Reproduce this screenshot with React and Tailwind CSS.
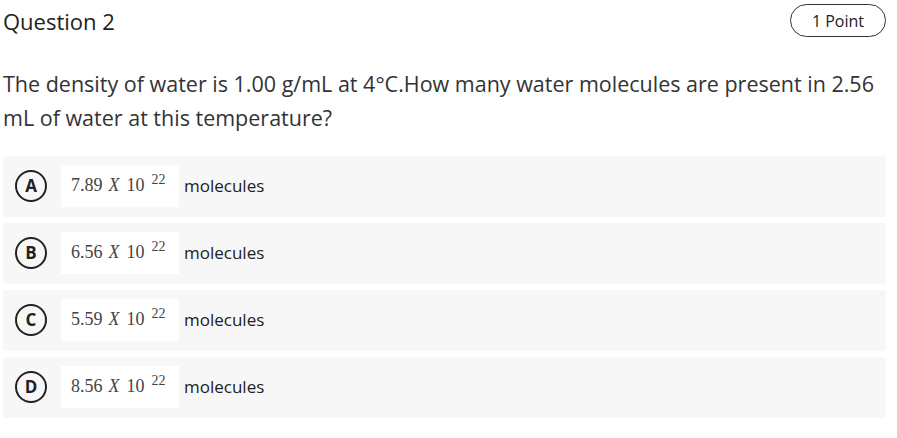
import React from "react";

const options = [
  { letter: "A", mant: "7.89" },
  { letter: "B", mant: "6.56" },
  { letter: "C", mant: "5.59" },
  { letter: "D", mant: "8.56" },
];

export default function App() {
  return (
    <div
      className="w-[897px] h-[438px] bg-white pl-[3px] pr-[11px] text-[#222]"
      style={{ fontFamily: "'Open Sans', sans-serif" }}
    >
      <div className="flex items-center justify-between pt-[4px]">
        <div className="text-[22px] leading-[30px] font-medium text-[#222]">Question 2</div>
        <div className="h-[33px] w-[96px] rounded-full border border-[#333] flex items-center justify-center text-[16px] text-[#222] font-medium">
          1 Point
        </div>
      </div>
      <div className="mt-[30px] text-[21.5px] leading-[34px] text-[#333]">
        The density of water is 1.00 g/mL at 4°C.How many water molecules are present in 2.56 mL of water at this temperature?
      </div>
      <div className="mt-[21px] flex flex-col gap-[6px]">
        {options.map((o) => (
          <div key={o.letter} className="h-[61px] rounded-[3px] bg-[#f7f7f7] flex items-center pl-[12px] pb-[2px]">
            <div className="w-[32px] h-[32px] rounded-full border-2 border-[#222] flex items-center justify-center text-[17px] font-bold text-[#222] leading-none">
              {o.letter}
            </div>
            <div
              className="ml-[14px] h-[42px] w-[118px] bg-white flex items-center pl-[10px] text-[18px] text-[#444]"
              style={{ fontFamily: "'Liberation Serif', serif" }}
            >
              <span>{o.mant}</span>
              <span className="italic ml-[6px]">X</span>
              <span className="ml-[7px]">10</span>
              <span className="ml-[7px] text-[14px] relative -top-[6px]">22</span>
            </div>
            <div className="ml-[5px] text-[17px] text-[#222]">molecules</div>
          </div>
        ))}
      </div>
    </div>
  );
}
